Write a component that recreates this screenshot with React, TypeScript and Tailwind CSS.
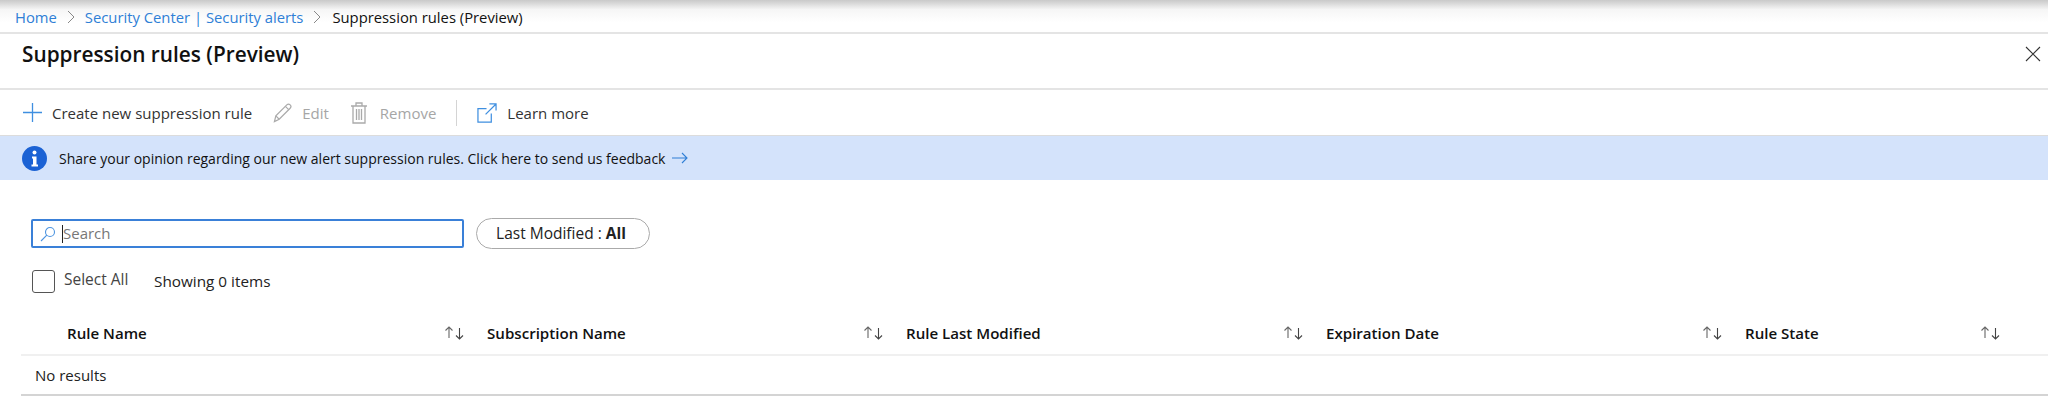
const FONT = "font-['Open_Sans','Noto_Sans',sans-serif]";

function SortArrows() {
  return (
    <svg width="21" height="16" viewBox="0 0 21 16" fill="none" strokeWidth="1.1">
      <path d="M5 13V2M1.500 5.500 5 2l3.500 3.500" stroke="#666" />
      <path d="M15.500 3v11M12 10.500l3.500 3.500 3.500-3.500" stroke="#444" />
    </svg>
  );
}

const columns = [
  { label: "Rule Name", width: "w-[454px]", pad: "pl-[46px]" },
  { label: "Subscription Name", width: "w-[419px]", pad: "pl-[12px]" },
  { label: "Rule Last Modified", width: "w-[420px]", pad: "pl-[12px]" },
  { label: "Expiration Date", width: "w-[419px]", pad: "pl-[12px]" },
  { label: "Rule State", width: "w-[278px]", pad: "pl-[12px]" },
];

export default function App() {
  return (
    <div className={`${FONT} w-[2048px] h-[415px] overflow-hidden bg-white text-[#111]`}>
      {/* breadcrumb */}
      <div className="h-[34px] border-b-2 border-[#e4e4e4] bg-gradient-to-b from-[#c9c9c9] via-[#f6f6f6] via-30% to-white to-70% flex items-center pl-[15px] pt-[2px] text-[14.8px] leading-none">
        <span className="text-[#2f7fd6]">Home</span>
        <svg className="mx-[10px]" width="8" height="14" viewBox="0 0 8 14" fill="none">
          <path d="M1 1l6 6-6 6" stroke="#888" />
        </svg>
        <span className="text-[#2f7fd6]">Security Center | Security alerts</span>
        <svg className="ml-[10px] mr-[11px]" width="8" height="14" viewBox="0 0 8 14" fill="none">
          <path d="M1 1l6 6-6 6" stroke="#888" />
        </svg>
        <span>Suppression rules (Preview)</span>
      </div>

      {/* title */}
      <div className="h-[56px] border-b-2 border-[#e4e4e4] flex justify-between pl-[22px] pr-[7px]">
        <h1 className="text-[20.8px] leading-[41px] font-semibold">Suppression rules (Preview)</h1>
        <svg className="mt-[12px]" width="16" height="16" viewBox="0 0 16 16" fill="none">
          <path d="M1 1l14 14M15 1 1 15" stroke="#333" strokeWidth="1.1" />
        </svg>
      </div>

      {/* toolbar */}
      <div className="h-[46px] border-b border-[#dcdcdc] flex items-center pl-[23px] text-[15px]">
        <svg width="19" height="19" viewBox="0 0 19 19" fill="none">
          <path d="M9.500 0v19M0 9.500h19" stroke="#3f8fe0" strokeWidth="1.3" />
        </svg>
        <span className="ml-[10px] mt-[2px] text-[#333]">Create new suppression rule</span>
        <svg className="ml-[21px]" width="20" height="20" viewBox="0 0 21 21" fill="none" stroke="#aaa" strokeWidth="1.3">
          <path d="M1.500 19.500l1.500-6L14.500 2c1-1 2.500-1 3.500 0s1 2.500 0 3.500L6.500 17z" />
          <path d="M3 13.500 6.500 17M13 3.500l3.500 3.500" />
        </svg>
        <span className="ml-[9px] mt-[2px] text-[#a6a6a6]">Edit</span>
        <svg className="ml-[22px]" width="16" height="22" viewBox="0 0 16 22" fill="none" stroke="#aaa" strokeWidth="1.3">
          <path d="M0 4h16M5 4V1h6v3M2 4v17h12V4M5.500 7v11M8 7v11M10.500 7v11" />
        </svg>
        <span className="ml-[13px] mt-[2px] text-[#a6a6a6]">Remove</span>
        <div className="ml-[20px] w-px h-[26px] bg-[#d4d4d4]" />
        <svg className="ml-[20px]" width="20" height="20" viewBox="0 0 21 21" fill="none" stroke="#3f8fe0" strokeWidth="1.3">
          <path d="M15 11v9H1V6h9M9 12 20 1M13 1h7v7" />
        </svg>
        <span className="ml-[10px] mt-[2px] text-[#333]">Learn more</span>
      </div>

      {/* info banner */}
      <div className="h-[44px] bg-[#d4e3fb] flex items-center pl-[22px] text-[14px]">
        <svg width="25" height="25" viewBox="0 0 25 25">
          <circle cx="12.500" cy="12.500" r="12.500" fill="#1b62d4" />
          <circle cx="12.500" cy="6.500" r="2" fill="#fff" />
          <path d="M10 10.500h4.500v8H16v2H9.500v-2H11v-6h-1z" fill="#fff" />
        </svg>
        <span className="ml-[12px]">Share your opinion regarding our new alert suppression rules. Click here to send us feedback</span>
        <svg className="ml-[7px]" width="16" height="12" viewBox="0 0 16 12" fill="none">
          <path d="M0 6h15M10 1l5 5-5 5" stroke="#2f7fd6" strokeWidth="1.1" />
        </svg>
      </div>

      {/* filters */}
      <div className="flex items-center pl-[31px] pt-[38px]">
        <div className="w-[433px] h-[29px] border-2 border-[#3a80d8] rounded-[2px] flex items-center pl-[7px] text-[15px] text-[#777]">
          <svg width="16" height="16" viewBox="0 0 16 16" fill="none" stroke="#4d94e0" strokeWidth="1.1">
            <circle cx="10" cy="6" r="4.500" />
            <path d="M6.800 9.200 1 15" />
          </svg>
          <span className="ml-[6px] w-px h-[18px] bg-[#222]" />
          <span>Search</span>
        </div>
        <div className="ml-[12px] w-[174px] h-[31px] border border-[#aaa] rounded-full flex items-center justify-center pr-[4px] text-[15.500px] text-[#222]">
          Last Modified :&nbsp;<b className="font-bold">All</b>
        </div>
      </div>

      <div className="flex items-center h-[23px] mt-[21px] pl-[32px] text-[15px]">
        <div className="w-[23px] h-[23px] border border-[#555] rounded-[3px]" />
        <span className="ml-[9px] -mt-[3px] w-[64px] whitespace-nowrap text-[15.500px] text-[#444]">Select All</span>
        <span className="ml-[26px] text-[#222] text-[15.300px]">Showing 0 items</span>
      </div>

      {/* table */}
      <div className="ml-[21px] mt-[20px]">
        <div className="flex items-center h-[43px] border-b-2 border-[#f0f0f0]">
          {columns.map((col) => (
            <div key={col.label} className={`${col.width} ${col.pad} shrink-0 flex items-center justify-between pr-[10px] text-[15.100px] font-semibold`}>
              <span>{col.label}</span>
              <SortArrows />
            </div>
          ))}
        </div>
        <div className="h-[40px] border-b-2 border-[#d4d4d4] flex items-center pl-[14px] text-[15px] text-[#222]">
          No results
        </div>
      </div>
    </div>
  );
}
